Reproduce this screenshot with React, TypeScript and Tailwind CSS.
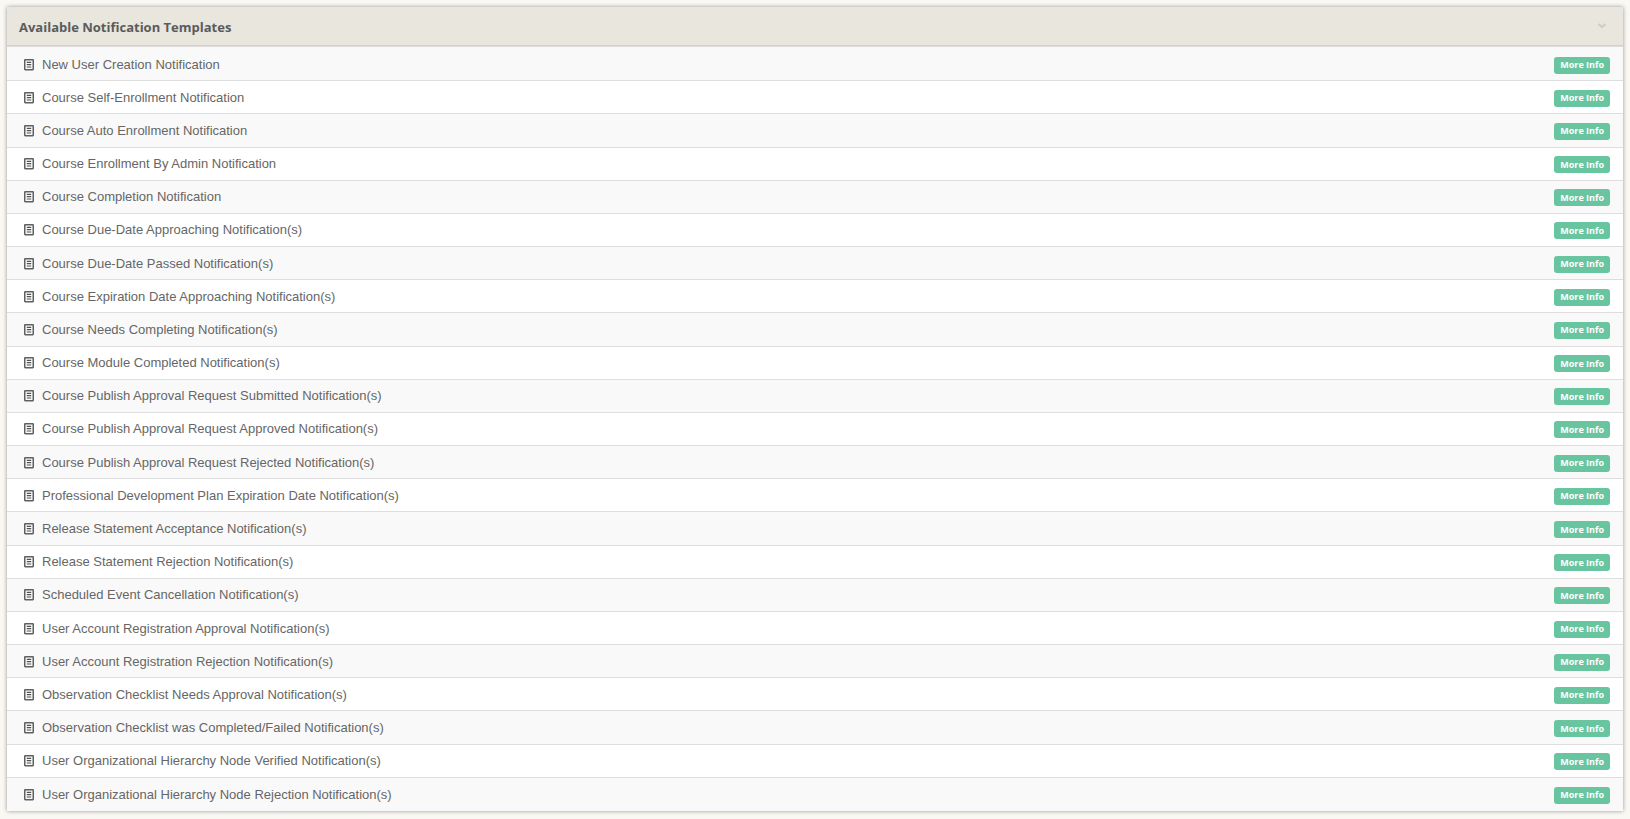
const templates: string[] = [
  'New User Creation Notification',
  'Course Self-Enrollment Notification',
  'Course Auto Enrollment Notification',
  'Course Enrollment By Admin Notification',
  'Course Completion Notification',
  'Course Due-Date Approaching Notification(s)',
  'Course Due-Date Passed Notification(s)',
  'Course Expiration Date Approaching Notification(s)',
  'Course Needs Completing Notification(s)',
  'Course Module Completed Notification(s)',
  'Course Publish Approval Request Submitted Notification(s)',
  'Course Publish Approval Request Approved Notification(s)',
  'Course Publish Approval Request Rejected Notification(s)',
  'Professional Development Plan Expiration Date Notification(s)',
  'Release Statement Acceptance Notification(s)',
  'Release Statement Rejection Notification(s)',
  'Scheduled Event Cancellation Notification(s)',
  'User Account Registration Approval Notification(s)',
  'User Account Registration Rejection Notification(s)',
  'Observation Checklist Needs Approval Notification(s)',
  'Observation Checklist was Completed/Failed Notification(s)',
  'User Organizational Hierarchy Node Verified Notification(s)',
  'User Organizational Hierarchy Node Rejection Notification(s)',
];

function DocumentIcon() {
  return (
    <svg aria-hidden="true" viewBox="0 0 10 12" className="h-3 w-[10px] shrink-0">
      <rect x="0.75" y="0.75" width="8.5" height="10" rx="0.4" fill="#fbfbfb" stroke="#5f6064" strokeWidth="1.5" />
      <path d="M2.8 2.8h4.4v1.2H2.8zM2.8 5.1h4.4v1.2H2.8zM2.8 7.4h4.4v1.2H2.8z" fill="#4f5054" />
    </svg>
  );
}

function ChevronIcon() {
  return (
    <svg aria-hidden="true" viewBox="0 0 8 6" className="h-[6px] w-2" fill="none">
      <path d="M0.7 1 4 4.2 7.3 1" stroke="#cbcbc8" strokeWidth="2" />
    </svg>
  );
}

export default function App() {
  return (
    <main className="flex min-h-screen flex-col bg-[#f9f8f3] px-[7px] pt-[7px] pb-2 font-['Liberation_Sans',Arial,sans-serif]">
      <section className="flex flex-1 flex-col rounded-[1px] bg-white shadow-[0_0_4px_rgba(0,0,0,0.4)]">
        <header className="flex h-[39px] items-center justify-between border-b border-[#d0d0c9] bg-[#e8e6dd] pr-[17px] pl-3">
          <h1 className="pt-px font-['Open_Sans',sans-serif] text-[13px] leading-5 font-bold text-[#5b5b5b]">
            Available Notification Templates
          </h1>
          <button type="button" aria-label="Collapse panel">
            <ChevronIcon />
          </button>
        </header>
        <ul className="grid flex-1 auto-rows-fr border-t border-[#dddddd] bg-[#f9f9f9] pt-px">
          {templates.map((name) => (
            <li
              key={name}
              className="flex min-h-8 items-center justify-between border-b border-[#dddddd] pt-px pr-[13px] pl-[17px] odd:bg-[#f9f9f9] even:bg-white last:border-b-0"
            >
              <span className="flex items-center gap-2 text-[13px] leading-5 text-[#666666]">
                <DocumentIcon />
                {name}
              </span>
              <button
                type="button"
                className="mt-px h-[17px] rounded-[3px] bg-[#69c4a0] px-[6px] font-['Open_Sans',sans-serif] text-[9px] leading-4 font-bold text-white"
              >
                More Info
              </button>
            </li>
          ))}
        </ul>
      </section>
    </main>
  );
}
